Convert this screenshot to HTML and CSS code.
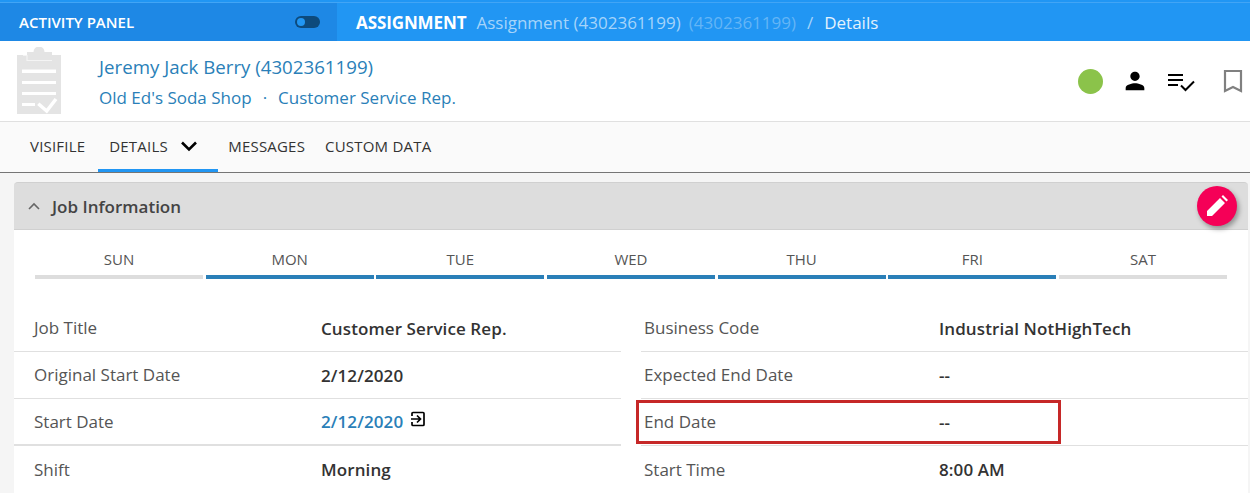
FILE: index.html
```html
<!DOCTYPE html>
<html lang="en">
<head>
<meta charset="utf-8">
<title>Assignment Details</title>
<link rel="stylesheet" href="styles.css">
</head>
<body>
<div class="topbar">
  <div class="panel-head">
    <span class="panel-title">ACTIVITY PANEL</span>
    <span class="toggle"><span class="knob"></span></span>
  </div>
  <div class="crumbs">
    <span class="crumb-main">ASSIGNMENT</span>
    <span class="crumb-link">Assignment (4302361199)</span>
    <span class="crumb-faint">(4302361199)</span>
    <span class="crumb-link crumb-sep">/</span>
    <span class="crumb-current">Details</span>
  </div>
</div>
<header class="identity">
  <svg class="clipboard" width="44" height="67" viewBox="0 0 44 67">
    <path fill="#e4e4e4" fill-rule="evenodd" d="M0 8h10V5h6.500a5.500 5.500 0 0 1 11 0H35v3h9v59H0zM5 22.500V26h34v-3.500zM5 34v3h34v-3zM5 45v3h34v-3zM5 56v3h13v-3z"/>
    <path fill="none" stroke="#f4f4f4" stroke-width="1.200" d="M6 8.500h4v5h25"/>
    <path fill="none" stroke="#fff" stroke-width="3.500" d="M21.300 56.700l8.400 7.300L39 52"/>
  </svg>
  <div class="identity-text">
    <div class="person">Jeremy Jack Berry (4302361199)</div>
    <div class="employer"><span>Old Ed's Soda Shop</span><span class="dot">·</span><span>Customer Service Rep.</span></div>
  </div>
  <div class="actions">
    <span class="status"></span>
    <svg class="icon-person" width="28" height="28" viewBox="0 0 24 24"><path d="M12 12c2.200 0 4-1.800 4-4s-1.800-4-4-4-4 1.800-4 4 1.800 4 4 4zm0 2c-2.700 0-8 1.300-8 4v2h16v-2c0-2.700-5.300-4-8-4z"/></svg>
    <svg class="icon-list" width="28" height="28" viewBox="0 0 28 28"><path d="M1 6h15v2H1zM1 11h15v2H1zM1 16h10v2H1z"/><path fill="none" stroke="#000" stroke-width="2" d="M14 17.500l4.500 4.500L27 13.500"/></svg>
    <svg class="icon-mark" width="20" height="24" viewBox="0 0 20 24"><path fill="none" stroke="#808080" stroke-width="2.200" d="M2 2h16v20l-8-4-8 4z"/></svg>
  </div>
</header>
<nav class="tabs">
  <span class="tab">VISIFILE</span>
  <span class="tab tab-active">DETAILS
    <svg width="18" height="12" viewBox="0 0 18 12"><path fill="none" stroke="#000" stroke-width="2.600" d="M2 2.500l7 7 7-7"/></svg>
  </span>
  <span class="tab">MESSAGES</span>
  <span class="tab">CUSTOM DATA</span>
</nav>
<main class="content">
  <section class="card">
    <div class="card-head">
      <svg width="12" height="8" viewBox="0 0 12 8"><path fill="none" stroke="#666" stroke-width="1.600" d="M1 7l5-5 5 5"/></svg>
      <span>Job Information</span>
    </div>
    <button class="fab" aria-label="Edit">
      <svg width="24" height="24" viewBox="0 0 24 24"><path fill="#fff" d="M2 22v-5L15 4l5 5L7 22zM16.500 2.500l1.500-1.500 5 5-1.500 1.500z"/></svg>
    </button>
    <div class="days">
      <div class="day">SUN</div>
      <div class="day day-on">MON</div>
      <div class="day day-on">TUE</div>
      <div class="day day-on">WED</div>
      <div class="day day-on">THU</div>
      <div class="day day-on">FRI</div>
      <div class="day">SAT</div>
    </div>
    <div class="fields">
      <div class="col col-left">
        <div class="row"><span class="label">Job Title</span><span class="value">Customer Service Rep.</span></div>
        <div class="row"><span class="label">Original Start Date</span><span class="value">2/12/2020</span></div>
        <div class="row row-thick"><span class="label">Start Date</span><span class="value value-link">2/12/2020</span>
          <svg class="icon-exit" width="18" height="18" viewBox="0 0 18 18"><path fill="none" stroke="#000" stroke-width="1.700" d="M3 6V3.500A1 1 0 0 1 4 2.500h10a1 1 0 0 1 1 1v11a1 1 0 0 1-1 1H4a1 1 0 0 1-1-1V12"/><path fill="none" stroke="#000" stroke-width="1.700" d="M2 9h9M8 5.500L11.500 9 8 12.500"/></svg>
        </div>
        <div class="row"><span class="label">Shift</span><span class="value">Morning</span></div>
      </div>
      <div class="col col-right">
        <div class="row"><span class="label">Business Code</span><span class="value">Industrial NotHighTech</span></div>
        <div class="row"><span class="label">Expected End Date</span><span class="value">--</span></div>
        <div class="row row-marked"><span class="label">End Date</span><span class="value">--</span><span class="marker"></span></div>
        <div class="row"><span class="label">Start Time</span><span class="value">8:00 AM</span></div>
      </div>
    </div>
  </section>
</main>
</body>
</html>
```
FILE: styles.css
```css
* { box-sizing: border-box; }
html, body { margin: 0; height: 493px; overflow: hidden; }
body { font-family: "Open Sans", sans-serif; background: #f5f5f5; color: #333; }

.topbar { display: flex; height: 41px; background: #2196f3; padding-top: 3px; box-shadow: inset 0 2px 0 #2196f3, inset 0 3px 0 #42a5f5; }
.panel-head { width: 337px; background: #1e88e5; display: flex; align-items: center; justify-content: space-between; padding: 0 17px 0 19px; }
.panel-title { color: #fff; font-size: 15px; font-weight: 600; }
.toggle { width: 25px; height: 12px; border-radius: 6px; background: #0d4a7c; display: block; position: relative; }
.knob { position: absolute; left: 2px; top: 2px; width: 8px; height: 8px; border-radius: 50%; background: #2196f3; }
.crumbs { display: flex; align-items: center; padding-left: 19px; font-size: 17px; white-space: nowrap; }
.crumb-main { color: #fff; font-weight: 700; margin-right: 10px; letter-spacing: -0.1px; }
.crumb-link { color: #a6d4fa; }
.crumb-faint { color: #64b5f6; margin-left: 8px; }
.crumb-sep { margin: 0 11px; }
.crumb-current { color: #e3f2fd; }

.identity { height: 81px; background: #fff; border-bottom: 1px solid #e0e0e0; display: flex; align-items: flex-start; }
.clipboard { margin: 6px 0 0 17px; flex: none; }
.identity-text { margin-left: 38px; color: #2a7fb8; }
.person { font-size: 18.700px; line-height: 25px; margin-top: 13px; }
.employer { font-size: 17px; line-height: 22px; margin-top: 8px; }
.dot { margin: 0 11px; }
.actions { margin-left: auto; display: flex; align-items: center; height: 80px; padding-right: 7px; }
.status { width: 25px; height: 25px; border-radius: 50%; background: #8bc34a; margin-right: 18px; }
.icon-person { margin-right: 18px; }
.icon-list { margin-right: 28px; margin-top: 2px; }

.tabs { height: 51px; background: #fafafa; border-bottom: 1px solid #757575; display: flex; padding-left: 20px; }
.tab { padding: 0 10px; font-size: 15px; letter-spacing: 0.200px; line-height: 49px; height: 50px; color: #333; white-space: nowrap; }
.tab-active { width: 120px; margin-left: 3px; padding-left: 11px; border-bottom: 3px solid #2196f3; }
.tab-active svg { margin-left: 8px; }

.content { padding: 9px 2px 0 14px; }
.card { position: relative; background: #fff; border-radius: 4px 4px 0 0; height: 320px; }
.card-head { height: 48px; background: #ddd; border: 1px solid #d0d0d0; border-width: 1px 0; border-radius: 4px 4px 0 0; display: flex; align-items: center; padding-left: 14px; gap: 12px; font-size: 17px; font-weight: 600; color: #444; }
.fab { position: absolute; top: 4px; right: 11px; width: 40px; height: 40px; padding: 0; border: 0; border-radius: 50%; background: #f50057; box-shadow: 2px 3px 5px rgba(0,0,0,.35); display: flex; align-items: center; justify-content: center; }

.days { display: grid; grid-template-columns: repeat(7, 168px); column-gap: 2.670px; margin: 21px 0 0 21px; }
.day { height: 28px; text-align: center; font-size: 15px; line-height: 16px; color: #555; border-bottom: 4px solid #ddd; }
.day-on { border-bottom-color: #2a7fb8; }

.fields { display: flex; gap: 20px; margin-top: 27px; }
.col { flex: 1; }
.row { height: 47px; display: flex; align-items: center; border-bottom: 1px solid #e0e0e0; font-size: 17px; position: relative; }
.row:first-child { height: 46px; }
.row:last-child { border-bottom: 0; }
.row-thick { border-bottom-width: 2px; }
.label { color: #555; flex: none; margin-top: -2px; }
.value { color: #333; font-weight: 600; white-space: nowrap; letter-spacing: 0.100px; margin-top: 0; }
.row:first-child .label { margin-top: -3px; }
.row:first-child .value { margin-top: -1px; }
.row-thick .label, .row:last-child .label { margin-top: 0; }
.row-marked .label { margin-top: -2px; }
.value-link { color: #2a7fb8; }
.col-left .row { padding-left: 20px; }
.col-left .label { width: 287px; }
.col-right .row { padding-left: 3px; }
.col-right .label { width: 295px; }
.icon-exit { margin: -5px 0 0 6px; }
.marker { position: absolute; left: -5px; top: 1px; width: 425px; height: 44px; border: 3px solid #c62828; pointer-events: none; }
```
